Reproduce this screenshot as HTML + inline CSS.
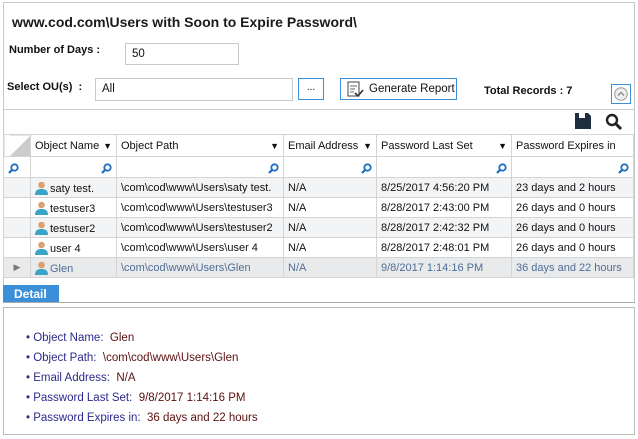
<!DOCTYPE html>
<html><head><meta charset="utf-8"><style>
*{margin:0;padding:0;box-sizing:border-box}
body{width:638px;height:439px;background:#fff;font-family:"Liberation Sans",Arial,sans-serif;font-size:12px;color:#111;position:relative;overflow:hidden}
.a{position:absolute}
.frame{left:3px;top:2px;width:632px;height:300px;border:1px solid #c8c8c8;border-bottom:none}
.title{left:12px;top:14px;font-size:14px;font-weight:bold;color:#1a1a1a}
.lbl{font-weight:bold;font-size:11px}
.inp{border:1px solid #c9c9c9;background:#fff;font-size:11.5px;padding:4px 6px}
.btn{border:1px solid #3c8fd6;background:#fff;font-size:11.5px;white-space:nowrap}
table{position:absolute;left:3px;top:134px;border-collapse:collapse;font-size:11px;table-layout:fixed}
td{border:1px solid #d4d4d4;height:20px;padding:0 4px;white-space:nowrap;overflow:hidden}
tr.h td{height:22px;background:#fff}
tr.f td{height:21px}
tr.g td{background:#f3f4f6}
tr.s td{background:#e9eaec;color:#4f6e96}
.ar{float:right;font-size:9px;margin-top:1px}
.mg{float:right;width:11px;height:11px;margin-top:2px}
.ui{display:inline-block;width:13px;height:14px;vertical-align:-3px;margin-right:2px}
.det li{list-style:none;color:#2d2a8c;height:20px;font-size:11.5px}
.det li span{color:#5a1010}
</style></head><body>
<svg width="0" height="0" style="position:absolute"><defs><symbol id="m" viewBox="0 0 11 11"><circle cx="6.5" cy="4.5" r="3.2" fill="none" stroke="#1e6fc0" stroke-width="1.8"/><path d="M4.3 6.7L1 10" stroke="#1e6fc0" stroke-width="2.2"/></symbol>
<symbol id="u" viewBox="0 0 13 14"><circle cx="6.5" cy="4" r="3.3" fill="#d9a070"/><path d="M0 14c0-5 3-6 6.5-6s6.5 1 6.5 6z" fill="#3aa3c8"/></symbol></defs></svg>
<div class="a frame"></div>
<div class="a title">www.cod.com\Users with Soon to Expire Password\</div>
<div class="a lbl" style="left:9px;top:44px">Number of Days :</div>
<div class="a inp" style="left:125px;top:43px;width:114px;height:22px">50</div>
<div class="a lbl" style="left:7px;top:81px">Select OU(s) &nbsp;:</div>
<div class="a inp" style="left:95px;top:78px;width:198px;height:23px">All</div>
<div class="a btn" style="left:298px;top:78px;width:26px;height:22px;text-align:center;font-size:10px;line-height:18px">...</div>
<div class="a btn" style="left:340px;top:78px;width:117px;height:22px;line-height:20px;padding-left:28px">Generate Report</div>
<svg class="a" style="left:346px;top:81px" width="18" height="17" viewBox="0 0 18 17"><rect x="2" y="1" width="11" height="14" fill="#fff" stroke="#444"/><path d="M4 5h7M4 8h5M4 11h4" stroke="#666"/><path d="M9 12l3 3 5-6" stroke="#333" stroke-width="1.6" fill="none"/></svg>
<div class="a lbl" style="left:484px;top:85px">Total Records : 7</div>
<div class="a" style="left:611px;top:84px;width:20px;height:20px;border:1px solid #3c8fd6;background:#fff"><svg style="margin:2px" width="14" height="14" viewBox="0 0 14 14"><circle cx="7" cy="7" r="6.3" fill="#eee" stroke="#999"/><path d="M4 8.5l3-3 3 3" stroke="#888" stroke-width="1.3" fill="none"/></svg></div>
<div class="a" style="left:3px;top:109px;width:632px;border-top:1px solid #ccc"></div>
<svg class="a" style="left:575px;top:113px" width="16" height="16" viewBox="0 0 16 16"><path d="M0 0h13l3 3v13H0z" fill="#1d2e3e"/><rect x="4" y="0" width="6" height="5" fill="#fff"/></svg>
<svg class="a" style="left:605px;top:113px" width="18" height="18" viewBox="0 0 18 18"><circle cx="7" cy="7" r="5" fill="none" stroke="#222" stroke-width="2.4"/><path d="M10.5 10.5l5.5 5.5" stroke="#222" stroke-width="3"/></svg>
<table>
<colgroup><col style="width:27px"><col style="width:86px"><col style="width:167px"><col style="width:93px"><col style="width:135px"><col style="width:122px"></colgroup>
<tr class="h"><td style="background:linear-gradient(135deg,#fff 55%,#ccc 56%)"></td><td>Object Name <span class="ar">▼</span></td><td>Object Path<span class="ar">▼</span></td><td>Email Address <span class="ar">▼</span></td><td>Password Last Set<span class="ar">▼</span></td><td>Password Expires in</td></tr>
<tr class="f"><td><svg class="mg" style="float:left"><use href="#m"/></svg></td><td><svg class="mg"><use href="#m"/></svg></td><td><svg class="mg"><use href="#m"/></svg></td><td><svg class="mg"><use href="#m"/></svg></td><td><svg class="mg"><use href="#m"/></svg></td><td><svg class="mg"><use href="#m"/></svg></td></tr>
<tr class="g"><td></td><td><svg class="ui"><use href="#u"/></svg>saty test.</td><td>\com\cod\www\Users\saty test.</td><td>N/A</td><td>8/25/2017 4:56:20 PM</td><td>23 days and 2 hours</td></tr>
<tr><td></td><td><svg class="ui"><use href="#u"/></svg>testuser3</td><td>\com\cod\www\Users\testuser3</td><td>N/A</td><td>8/28/2017 2:43:00 PM</td><td>26 days and 0 hours</td></tr>
<tr class="g"><td></td><td><svg class="ui"><use href="#u"/></svg>testuser2</td><td>\com\cod\www\Users\testuser2</td><td>N/A</td><td>8/28/2017 2:42:32 PM</td><td>26 days and 0 hours</td></tr>
<tr><td></td><td><svg class="ui"><use href="#u"/></svg>user 4</td><td>\com\cod\www\Users\user 4</td><td>N/A</td><td>8/28/2017 2:48:01 PM</td><td>26 days and 0 hours</td></tr>
<tr class="s"><td style="color:#777;font-size:9px;text-align:center">▶</td><td><svg class="ui"><use href="#u"/></svg>Glen</td><td>\com\cod\www\Users\Glen</td><td>N/A</td><td>9/8/2017 1:14:16 PM</td><td>36 days and 22 hours</td></tr>
</table>
<div class="a" style="left:3px;top:285px;width:56px;height:18px;background:#3b8fd9;color:#fff;font-weight:bold;font-size:12px;padding:2px 0 0 11px">Detail</div>
<div class="a" style="left:3px;top:302px;width:632px;border-top:1px solid #aaa"></div>
<div class="a" style="left:3px;top:307px;width:632px;height:128px;border:1px solid #bbb"></div>
<ul class="a det" style="left:26px;top:332px">
<li>• Object Name: &nbsp;<span>Glen</span></li>
<li>• Object Path: &nbsp;<span>\com\cod\www\Users\Glen</span></li>
<li>• Email Address: &nbsp;<span>N/A</span></li>
<li>• Password Last Set: &nbsp;<span>9/8/2017 1:14:16 PM</span></li>
<li>• Password Expires in: &nbsp;<span>36 days and 22 hours</span></li>
</ul>
</body></html>
